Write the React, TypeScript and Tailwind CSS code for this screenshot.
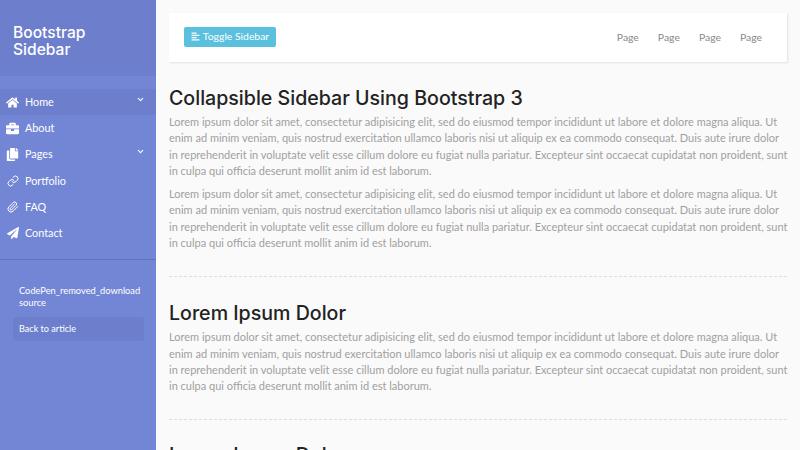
import { FaHome, FaBriefcase, FaCopy, FaPaperPlane, FaAlignLeft } from 'react-icons/fa';
import { LuChevronDown, LuLink, LuPaperclip } from 'react-icons/lu';

const LINES = [
  'Lorem ipsum dolor sit amet, consectetur adipisicing elit, sed do eiusmod tempor incididunt ut labore et dolore magna aliqua. Ut',
  'enim ad minim veniam, quis nostrud exercitation ullamco laboris nisi ut aliquip ex ea commodo consequat. Duis aute irure dolor',
  'in reprehenderit in voluptate velit esse cillum dolore eu fugiat nulla pariatur. Excepteur sint occaecat cupidatat non proident, sunt',
  'in culpa qui officia deserunt mollit anim id est laborum.',
];

const NAV = [
  { label: 'Home', icon: FaHome, size: 'w-[13px] h-[13px]', caret: true, active: true },
  { label: 'About', icon: FaBriefcase, size: 'w-[13px] h-[13px]' },
  { label: 'Pages', icon: FaCopy, size: 'w-[13px] h-[13px]', caret: true },
  { label: 'Portfolio', icon: LuLink, size: 'w-[12px] h-[12px] ml-[0.5px]' },
  { label: 'FAQ', icon: LuPaperclip, size: 'w-[12px] h-[12px] ml-[0.5px]' },
  { label: 'Contact', icon: FaPaperPlane, size: 'w-[12px] h-[12px] ml-[0.5px]' },
];

function Lorem() {
  return (
    <p className="text-[11px] leading-[16.3px] text-[#a0a0a0]">
      {LINES.map(line => (
        <span key={line} className="block whitespace-nowrap">{line}</span>
      ))}
    </p>
  );
}

export default function App() {
  return (
    <div className="flex h-[450px] w-[800px] overflow-hidden bg-[#fafafa] font-['Lato',sans-serif]">
      {/* Sidebar */}
      <aside className="w-[156px] shrink-0 bg-[#7386d5] text-white">
        <div className="h-[76px] bg-[#6d7fcc] pl-[13px] pt-[24px]">
          <h3 className="font-['Inter',sans-serif] text-[15.6px] leading-[17px] font-medium">Bootstrap<br />Sidebar</h3>
        </div>
        <ul className="border-b border-[#5f73b8] pt-[13px] pb-[13px]">
          {NAV.map(item => (
            <li
              key={item.label}
              className={`flex h-[26.2px] items-center pl-[6px] text-[10.8px] ${item.active ? 'bg-[#6d7fcc]' : ''}`}
            >
              <span className="w-[13px] shrink-0">
                <item.icon className={item.size} />
              </span>
              <span className="ml-[6px]">{item.label}</span>
              {item.caret && <LuChevronDown className="ml-auto mr-[11px] mb-[5px] w-[9px] h-[9px]" strokeWidth={3} />}
            </li>
          ))}
        </ul>
        <div className="pt-[25px] px-[13px]">
          <p className="px-[6px] text-[9.3px] leading-[12px]">CodePen_removed_download<br />source</p>
          <div className="mt-[8px] h-[24px] w-[131px] rounded-[3px] bg-[#6d7fcc] pl-[6px] text-[9.1px] leading-[23px]">Back to article</div>
        </div>
      </aside>

      {/* Content */}
      <main className="flex-1 min-w-0 pl-[13px] pr-[13px] pt-[13px]">
        <nav className="flex h-[49px] items-center justify-between bg-white pl-[15px] pr-[25px] pb-[2px] shadow-[1px_1px_2px_rgba(0,0,0,0.1)]">
          <button className="flex h-[20px] w-[92px] items-center justify-center gap-[3px] rounded-[2px] bg-[#5bc0de] text-[10.4px] text-white">
            <FaAlignLeft className="w-[9px] h-[9px]" />
            Toggle Sidebar
          </button>
          <div className="flex gap-[19px] pt-[2px] text-[10.4px] text-[#888]">
            <span>Page</span>
            <span>Page</span>
            <span>Page</span>
            <span>Page</span>
          </div>
        </nav>

        <h2 className="mt-[22px] font-['Inter',sans-serif] text-[19.6px] leading-[28px] font-medium text-[#222]">Collapsible Sidebar Using Bootstrap 3</h2>
        <div className="mt-[2px]"><Lorem /></div>
        <div className="mt-[7px]"><Lorem /></div>
        <div className="mt-[25px] border-b border-dashed border-[#ddd]" />

        <h2 className="mt-[22px] font-['Inter',sans-serif] text-[19.6px] leading-[28px] font-medium text-[#222]">Lorem Ipsum Dolor</h2>
        <div className="mt-[2px]"><Lorem /></div>
        <div className="mt-[24px] border-b border-dashed border-[#ddd]" />
        <h2 className="mt-[21px] font-['Inter',sans-serif] text-[19.6px] leading-[28px] font-medium text-[#222]">Lorem Ipsum Dolor</h2>
      </main>
    </div>
  );
}
